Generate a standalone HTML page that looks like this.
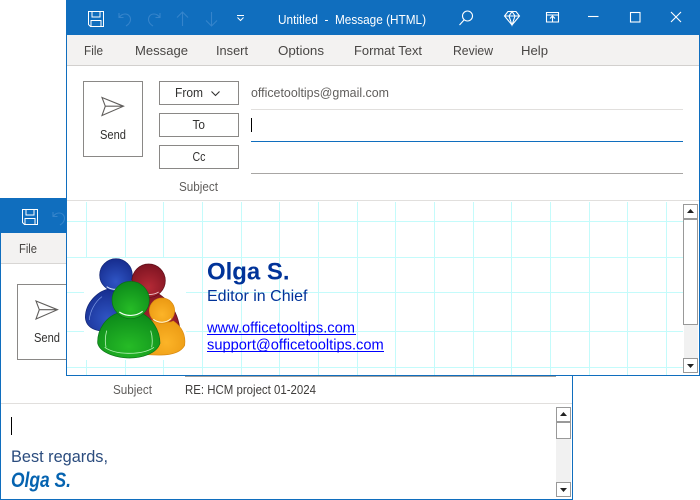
<!DOCTYPE html>
<html><head><meta charset="utf-8"><style>
html,body{margin:0;padding:0;background:#fff;width:700px;height:500px;overflow:hidden}
svg{display:block;position:absolute;left:0;top:0}
text{font-family:"Liberation Sans",sans-serif;font-size:13px;fill:#444}
.tab{fill:#484644;font-size:13px}
.lab{fill:#323130;font-size:13px}
</style></head><body>
<svg width="700" height="500" viewBox="0 0 700 500" xmlns="http://www.w3.org/2000/svg">
<defs>
<radialGradient id="gb" cx=".5" cy=".7" r=".75"><stop offset="0" stop-color="#2f55c4"/><stop offset="1" stop-color="#14298a"/></radialGradient>
<radialGradient id="gr" cx=".5" cy=".7" r=".75"><stop offset="0" stop-color="#b52a36"/><stop offset="1" stop-color="#7a1220"/></radialGradient>
<radialGradient id="gg" cx=".5" cy=".75" r=".75"><stop offset="0" stop-color="#26bb26"/><stop offset="1" stop-color="#0c8a1a"/></radialGradient>
<radialGradient id="go" cx=".5" cy=".65" r=".75"><stop offset="0" stop-color="#fcb428"/><stop offset="1" stop-color="#e8950f"/></radialGradient>
</defs>

<!-- BACK WINDOW -->
<rect x="0.5" y="198.5" width="572" height="301" fill="#fff" stroke="#106ebe"/>
<rect x="0" y="198" width="573" height="35" fill="#106ebe"/>
<rect x="1" y="233" width="571" height="30" fill="#f3f2f1"/>
<rect x="1" y="263" width="571" height="1" fill="#d8d6d4"/>
<path d="M22.5 209.5h15v15h-13l-2-2zM26 209.5v5.5h8v-5.500M25 224.500v-6h10v6" fill="none" stroke="#fff"/>
<path d="M53 212v4.500h4.500M53.500 216c3-4 8.500-4 10.500 0c1.500 3.500-.5 7-4 9" fill="none" stroke="#3584cb" stroke-width="1.100"/>
<text class="tab" x="19" y="253" textLength="18" lengthAdjust="spacingAndGlyphs">File</text>
<rect x="17.500" y="284.500" width="60" height="75" fill="#fff" stroke="#8a8886"/>
<path d="M36 301l21.500 8.700L36 319l3.300-9.300zM39.300 309.700h18" fill="none" stroke="#605e5c" stroke-width="1.100"/>
<text class="lab" x="34" y="342" textLength="26" lengthAdjust="spacingAndGlyphs">Send</text>
<rect x="185" y="376" width="371" height="1" fill="#a19f9d"/>
<text x="113" y="394" textLength="39" lengthAdjust="spacingAndGlyphs" style="fill:#605e5c">Subject</text>
<text x="185" y="394" textLength="131" lengthAdjust="spacingAndGlyphs" style="fill:#3f3d3b">RE: HCM project 01-2024</text>
<rect x="1" y="403" width="571" height="1" fill="#e1dfdd"/>
<rect x="11" y="417" width="1" height="18" fill="#000"/>
<text x="11" y="462" textLength="97" lengthAdjust="spacingAndGlyphs" style="font-size:17px;fill:#2b4c7e">Best regards,</text>
<text x="11" y="487" textLength="60" lengthAdjust="spacingAndGlyphs" style="font-size:21px;font-weight:bold;font-style:italic;fill:#0563b0">Olga S.</text>
<!-- back scrollbar -->
<rect x="556" y="407" width="15" height="90" fill="#f1f1f1"/>
<rect x="556.500" y="407.500" width="14" height="14" fill="#fff" stroke="#999"/>
<rect x="556.500" y="422.500" width="14" height="16" fill="#fff" stroke="#999"/>
<rect x="556" y="421" width="15" height="2" fill="#999"/>
<rect x="556.500" y="482.500" width="14" height="14" fill="#fff" stroke="#999"/>
<path d="M560 416h7l-3.500-4zM560 488h7l-3.500 4z" fill="#222"/>

<!-- FRONT WINDOW -->
<rect x="66.500" y="0.500" width="633" height="375" fill="#fff" stroke="#106ebe"/>
<rect x="66" y="0" width="634" height="35" fill="#106ebe"/>
<rect x="67" y="35" width="632" height="30" fill="#f3f2f1"/>
<rect x="67" y="65" width="632" height="1" fill="#d2d0ce"/>

<!-- grid -->
<g fill="#c4fbfb">
<rect x="86" y="202" width="1" height="173"/><rect x="125" y="202" width="1" height="173"/><rect x="163" y="202" width="1" height="173"/><rect x="202" y="202" width="1" height="173"/><rect x="241" y="202" width="1" height="173"/><rect x="279" y="202" width="1" height="173"/><rect x="318" y="202" width="1" height="173"/><rect x="357" y="202" width="1" height="173"/><rect x="395" y="202" width="1" height="173"/><rect x="434" y="202" width="1" height="173"/><rect x="473" y="202" width="1" height="173"/><rect x="511" y="202" width="1" height="173"/><rect x="550" y="202" width="1" height="173"/><rect x="589" y="202" width="1" height="173"/><rect x="627" y="202" width="1" height="173"/><rect x="666" y="202" width="1" height="173"/>
<rect x="67" y="221" width="616" height="1"/><rect x="67" y="257" width="616" height="1"/><rect x="67" y="292" width="616" height="1"/><rect x="67" y="331" width="616" height="1"/><rect x="67" y="367" width="616" height="1"/>
</g>

<!-- title bar icons -->
<path d="M88.500 11.500h15v15h-13l-2-2zM92 11.500v5.500h8v-5.500M91 26.500v-6h10v6" fill="none" stroke="#fff"/>
<g fill="none" stroke="#3584cb" stroke-width="1.100">
<path d="M119 13v4.500h4.500M119.500 17c3-4 8.500-4 10.500 0c1.500 3.500-.5 7-4 9"/>
<path d="M160 13v4.500h-4.500M159.500 17c-3-4-8.500-4-10.500 0c-1.500 3.500.5 7 4 9"/>
<path d="M182.500 12v14M177 17.500l5.500-5.500l5.500 5.500"/>
<path d="M211.500 12v14M206 20.500l5.500 5.500l5.500-5.500"/>
</g>
<path d="M237 15.500h7M237.500 17.500l3 3l3-3" fill="none" stroke="#fff"/>
<text x="278" y="24" textLength="148" lengthAdjust="spacingAndGlyphs" style="fill:#fff;font-size:13px" xml:space="preserve">Untitled  -  Message (HTML)</text>
<g fill="none" stroke="#fff" stroke-width="1.100">
<circle cx="467.500" cy="16" r="5"/><path d="M464 20l-4.500 5"/>
<path d="M508 11.500h8l3.500 4.500l-7.500 9l-7.500-9zM504.500 16h15M509 16l3 9l3-9M509 16l3-4.500l3 4.500"/>
<path d="M546.500 12.500h12v9.500h-12zM546.500 15h12M552.500 21.500v-5M550 18.500l2.500-2.500l2.500 2.500"/>
<path d="M588 16.500h10.500"/>
<rect x="630.500" y="12.500" width="9.500" height="9.500"/>
<path d="M671 12l10 10M681 12l-10 10"/>
</g>

<!-- tabs -->
<text class="tab" x="84" y="55" textLength="19" lengthAdjust="spacingAndGlyphs">File</text>
<text class="tab" x="135" y="55" textLength="53" lengthAdjust="spacingAndGlyphs">Message</text>
<text class="tab" x="216" y="55" textLength="32" lengthAdjust="spacingAndGlyphs">Insert</text>
<text class="tab" x="278" y="55" textLength="46" lengthAdjust="spacingAndGlyphs">Options</text>
<text class="tab" x="354" y="55" textLength="68" lengthAdjust="spacingAndGlyphs">Format Text</text>
<text class="tab" x="453" y="55" textLength="40" lengthAdjust="spacingAndGlyphs">Review</text>
<text class="tab" x="521" y="55" textLength="27" lengthAdjust="spacingAndGlyphs">Help</text>

<!-- header fields -->
<rect x="83.500" y="81.500" width="59" height="75" fill="#fff" stroke="#8a8886"/>
<path d="M102 97.500l21.500 8.700L102 115.500l3.300-9.300zM105.300 106.200h18" fill="none" stroke="#605e5c" stroke-width="1.100"/>
<text class="lab" x="100" y="139" textLength="26" lengthAdjust="spacingAndGlyphs">Send</text>
<rect x="159.500" y="81.500" width="79" height="23" fill="#fff" stroke="#8a8886"/>
<rect x="159.500" y="113.500" width="79" height="23" fill="#fff" stroke="#8a8886"/>
<rect x="159.500" y="145.500" width="79" height="23" fill="#fff" stroke="#8a8886"/>
<text class="lab" x="175" y="97" textLength="28" lengthAdjust="spacingAndGlyphs">From</text>
<path d="M211.500 91.500l4 4l4-4" fill="none" stroke="#323130" stroke-width="1.100"/>
<text class="lab" x="192.500" y="129" textLength="12.500" lengthAdjust="spacingAndGlyphs">To</text>
<text class="lab" x="192.500" y="161" textLength="13" lengthAdjust="spacingAndGlyphs">Cc</text>
<text x="251" y="97" textLength="138" lengthAdjust="spacingAndGlyphs" style="fill:#605e5c">officetooltips@gmail.com</text>
<rect x="251" y="109" width="432" height="1" fill="#e1dfdd"/>
<rect x="251" y="118" width="1" height="14" fill="#000"/>
<rect x="251" y="141" width="432" height="1" fill="#106ebe"/>
<rect x="251" y="173" width="432" height="1" fill="#a8a6a4"/>
<text x="179" y="191" textLength="39" lengthAdjust="spacingAndGlyphs" style="fill:#605e5c">Subject</text>
<rect x="67" y="200" width="632" height="1" fill="#e1dfdd"/>

<!-- logo -->
<rect x="84" y="258" width="102" height="102" fill="#fff"/>
<svg x="66" y="240" width="140" height="130" viewBox="0 0 420 390">
<path d="M58 232C58 190 95 150 135 146L190 150L190 255L130 274C92 276 60 265 58 232Z" fill="url(#gb)" stroke="#10236f" stroke-width="2"/>
<path d="M70 240C72 212 88 185 108 170" fill="none" stroke="#7f9ce6" stroke-width="2"/>
<circle cx="150" cy="105" r="49" fill="url(#gb)" stroke="#0f2270" stroke-width="2"/>
<path d="M122 140C140 152 165 150 180 138" fill="none" stroke="#dfe7fb" stroke-width="3"/>
<path d="M222 148C285 145 332 200 341 262L260 300L215 270Z" fill="url(#gr)" stroke="#5e0d18" stroke-width="2"/>
<circle cx="248" cy="122" r="50" fill="url(#gr)" stroke="#5e0d18" stroke-width="2"/>
<path d="M222 158C238 166 262 166 278 156" fill="none" stroke="#f0c8cc" stroke-width="2.500"/>
<path d="M250 238C270 250 310 250 322 243C347 260 360 285 356 316C340 347 290 347 245 344Z" fill="url(#go)" stroke="#d98a10" stroke-width="2"/>
<circle cx="288" cy="212" r="38" fill="url(#go)" stroke="#d98a10" stroke-width="2"/>
<path d="M262 238C278 250 300 250 315 236" fill="none" stroke="#fff6d8" stroke-width="3"/>
<path d="M160 218C120 228 93 270 95 310C103 342 160 354 190 354C225 354 272 342 282 310C282 270 257 233 225 218C205 232 180 232 160 218Z" fill="url(#gg)" stroke="#0a7016" stroke-width="2"/>
<path d="M116 322C150 346 230 346 264 322M122 272C118 287 116 302 120 322M254 272C260 290 260 305 257 322" fill="none" stroke="#b4f0b4" stroke-width="2.500"/>
<circle cx="194" cy="180" r="56" fill="url(#gg)" stroke="#0a7016" stroke-width="2"/>
<path d="M160 216C180 230 210 230 230 214" fill="none" stroke="#f0fff0" stroke-width="3.500"/>
</svg>

<!-- signature -->
<text x="207" y="279.500" textLength="82.500" lengthAdjust="spacingAndGlyphs" style="font-size:24px;font-weight:bold;fill:#003399">Olga S.</text>
<text x="207" y="301" style="font-size:16px;fill:#003399">Editor in Chief</text>
<text x="207" y="332.500" style="font-size:14.670px;fill:#0000ff">www.officetooltips.com</text>
<rect x="207" y="334" width="149" height="1" fill="#0000ff"/>
<text x="207" y="349.500" style="font-size:14.670px;fill:#0000ff">support@officetooltips.com</text>
<rect x="207" y="351" width="177" height="1" fill="#0000ff"/>

<!-- front scrollbar -->
<rect x="684" y="204" width="14" height="168" fill="#f1f1f1"/>
<rect x="683.500" y="204.500" width="14" height="14" fill="#fff" stroke="#999"/>
<rect x="683.500" y="219.500" width="14" height="105" fill="#fff" stroke="#999"/>
<rect x="683" y="218" width="15" height="2" fill="#999"/>
<rect x="683.500" y="358.500" width="14" height="14" fill="#fff" stroke="#999"/>
<path d="M687 213h7l-3.500-4zM687 364h7l-3.500 4z" fill="#222"/>
</svg>
</body></html>
